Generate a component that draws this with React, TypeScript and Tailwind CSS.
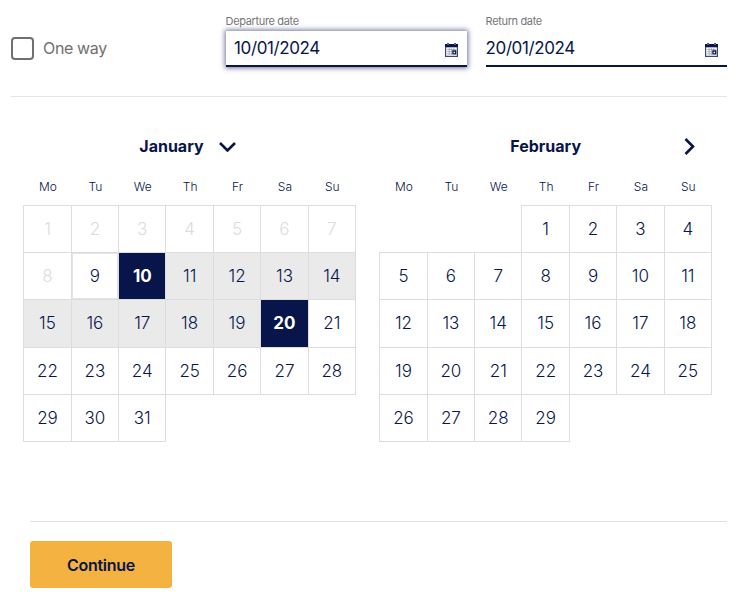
import React from 'react';

interface Month {
  name: string;
  offset: number;
  days: number;
}

const WEEKDAYS = ['Mo', 'Tu', 'We', 'Th', 'Fr', 'Sa', 'Su'];
const TODAY = 9;
const DEPARTURE = 10;
const RETURN = 20;

const january: Month = { name: 'January', offset: 0, days: 31 };
const february: Month = { name: 'February', offset: 3, days: 29 };

const CalendarIcon: React.FC = () => (
  <svg width="13" height="14" viewBox="0 0 13 14" fill="none">
    <path d="M0 1h13v13H0z" fill="#3c4775" />
    <path d="M0 1h13v3H0z" fill="#07154a" />
    <path d="M2 0h2v2H2zM9 0h2v2H9z" fill="#56608a" />
    <path d="M1.2 4.4h10.6v8.4H1.2z" fill="#fff" />
    <path d="M2 6.5h9M2 8.7h5M2 10.9h5M4.2 5v7M6.4 5v7M8.8 5v2" stroke="#7f88a8" strokeWidth="0.6" />
    <path d="M7.9 8h2.8v2.8H7.9z" stroke="#07154a" strokeWidth="1.3" />
  </svg>
);

interface DateFieldProps {
  label: string;
  value: string;
  focused?: boolean;
}

const DateField: React.FC<DateFieldProps> = ({ label, value, focused = false }) => (
  <div className="w-[241px]">
    <div className="h-[18px] pt-px text-[11px] leading-[14px] tracking-[-0.35px] text-[#767676]">{label}</div>
    <div
      className={`flex h-[36px] items-center justify-between border-b-2 border-[#07154a] pr-[9px] ${
        focused ? 'bg-white pl-[8.5px] shadow-[0_0_5px_1px_#07154a99]' : ''
      }`}
    >
      <span className="pt-px text-[17px] tracking-[-0.4px] text-[#07154a]">{value}</span>
      <span className="pt-[3px]">
        <CalendarIcon />
      </span>
    </div>
  </div>
);

const dayStyle = (month: Month, day: number) => {
  if (month.name !== 'January') return 'font-light text-[#07154a]';
  if (day < TODAY) return 'font-light text-[#dcdcdc]';
  if (day === DEPARTURE || day === RETURN) return 'bg-[#07154a] bg-clip-padding font-bold text-white';
  if (day > DEPARTURE && day < RETURN) return 'bg-[#eaeaea] font-light text-[#07154a]';
  if (day === TODAY) return 'font-light text-[#07154a] shadow-[inset_0_0_0_1px_#e4e4e4]';
  return 'font-light text-[#07154a]';
};

const MonthGrid: React.FC<{ month: Month }> = ({ month }) => (
  <div>
    <div className="grid grid-cols-[repeat(7,47.4px)] pl-px text-center text-[12px] leading-4 font-light text-[#07154a]">
      {WEEKDAYS.map((weekday) => (
        <span key={weekday}>{weekday}</span>
      ))}
    </div>
    <div className="mt-[9.6px] grid auto-rows-[47.35px] grid-cols-[repeat(7,47.4px)]">
      {Array.from({ length: month.offset }, (_, i) => (
        <span key={`blank-${i}`} />
      ))}
      {Array.from({ length: month.days }, (_, i) => i + 1).map((day) => (
        <button
          key={day}
          className={`-mr-px -mb-px flex items-center justify-center border border-[#dddddd] pt-px text-[17px] ${dayStyle(month, day)}`}
        >
          {day}
        </button>
      ))}
    </div>
  </div>
);

const App: React.FC = () => (
  <div className="h-[596px] w-[743px] overflow-hidden bg-white font-['Inter','Liberation_Sans',sans-serif]">
    {/* Trip type and dates */}
    <div className="mr-4 ml-[11px] flex h-[97px] border-b border-[#e5e5e5] pt-[13px]">
      <label className="flex h-[70px] w-[214.6px] items-center gap-[9px] text-[16px] tracking-[-0.35px] text-[#707070]">
        <span className="size-[23px] rounded-[4px] border-2 border-[#707070]" />
        <span>One way</span>
      </label>
      <div className="flex gap-[19px]">
        <DateField label="Departure date" value="10/01/2024" focused />
        <DateField label="Return date" value="20/01/2024" />
      </div>
    </div>

    {/* Months */}
    <div className="flex h-[424px] gap-[23.5px] pt-[36px] pl-[23.3px]">
      <div className="w-[332.5px]">
        <div className="flex h-[26px] items-center gap-[15px] pl-[116px] text-[16px] font-bold text-[#07154a]">
          <span>January</span>
          <svg width="17" height="11" viewBox="0 0 17 11" fill="none" stroke="#07154a" strokeWidth="2.6">
            <path d="M1 2l7.5 7.5L16 2" />
          </svg>
        </div>
        <div className="mt-5">
          <MonthGrid month={january} />
        </div>
      </div>
      <div className="w-[332.5px]">
        <div className="flex h-[26px] items-center justify-between pr-[17px] pl-[131px] text-[16px] font-bold text-[#07154a]">
          <span>February</span>
          <svg width="11" height="17" viewBox="0 0 11 17" fill="none" stroke="#07154a" strokeWidth="2.6">
            <path d="M1.5 1L9 8.5 1.5 16" />
          </svg>
        </div>
        <div className="mt-5">
          <MonthGrid month={february} />
        </div>
      </div>
    </div>

    <div className="mr-4 ml-[30px] border-t border-[#e0e0e0] pt-[19px]">
      <button className="h-[47px] w-[142px] rounded-[3px] bg-[#f4b240] text-[16px] font-semibold tracking-[-0.3px] text-[#07154a]">
        Continue
      </button>
    </div>
  </div>
);

export default App;
